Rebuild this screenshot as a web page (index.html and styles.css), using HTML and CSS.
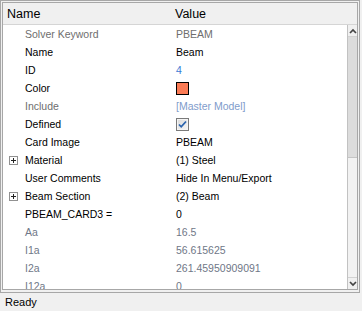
FILE: index.html
```html
<!DOCTYPE html>
<html>
<head>
<meta charset="utf-8">
<link rel="stylesheet" href="styles.css">
</head>
<body>
<div class="frame">
  <div class="grid">
    <div class="header">
      <div class="h-name">Name</div>
      <div class="h-value">Value</div>
    </div>
    <div class="body">
      <div class="rows">
        <div class="row"><div class="name gray">Solver Keyword</div><div class="value gray">PBEAM</div></div>
        <div class="row"><div class="name">Name</div><div class="value">Beam</div></div>
        <div class="row"><div class="name">ID</div><div class="value blue">4</div></div>
        <div class="row"><div class="name">Color</div><div class="value"><span class="swatch"></span></div></div>
        <div class="row"><div class="name gray">Include</div><div class="value lightblue">[Master Model]</div></div>
        <div class="row"><div class="name">Defined</div><div class="value">
          <svg class="check" width="13" height="13" viewBox="0 0 13 13">
            <defs><linearGradient id="cg" x1="0" y1="0" x2="1" y2="1"><stop offset="0" stop-color="#d9d9d9"/><stop offset="1" stop-color="#f7f7f7"/></linearGradient></defs>
            <rect x="0.5" y="0.5" width="12" height="12" fill="url(#cg)" stroke="#7a7a7a"/>
            <rect x="1.5" y="1.5" width="10" height="10" fill="none" stroke="#f4f4f4"/>
            <polyline points="3,6.5 5.2,8.8 10,3.5" fill="none" stroke="#2a63ad" stroke-width="1.8"/>
          </svg></div></div>
        <div class="row"><div class="name">Card Image</div><div class="value">PBEAM</div></div>
        <div class="row"><div class="name">
          <svg class="plus" width="9" height="9" viewBox="0 0 9 9"><rect x="0.5" y="0.5" width="8" height="8" fill="#fff" stroke="#919191"/><path d="M2 4.5H7M4.5 2V7" stroke="#222" stroke-width="1"/></svg>Material</div><div class="value">(1) Steel</div></div>
        <div class="row"><div class="name">User Comments</div><div class="value">Hide In Menu/Export</div></div>
        <div class="row"><div class="name">
          <svg class="plus" width="9" height="9" viewBox="0 0 9 9"><rect x="0.5" y="0.5" width="8" height="8" fill="#fff" stroke="#919191"/><path d="M2 4.5H7M4.5 2V7" stroke="#222" stroke-width="1"/></svg>Beam Section</div><div class="value">(2) Beam</div></div>
        <div class="row"><div class="name">PBEAM_CARD3 =</div><div class="value">0</div></div>
        <div class="row"><div class="name slate">Aa</div><div class="value slate">16.5</div></div>
        <div class="row"><div class="name slate">I1a</div><div class="value slate">56.615625</div></div>
        <div class="row"><div class="name slate">I2a</div><div class="value slate">261.45950909091</div></div>
        <div class="row"><div class="name slate">I12a</div><div class="value slate">0</div></div>
      </div>
      <div class="scrollbar">
        <div class="btn btn-up">
          <svg width="8" height="6" viewBox="0 0 8 6"><polyline points="1,5 4,2 7,5" fill="none" stroke="#444" stroke-width="1.7"/></svg>
        </div>
        <div class="thumb"></div>
        <div class="track"></div>
        <div class="btn btn-down">
          <svg width="8" height="6" viewBox="0 0 8 6"><polyline points="1,1 4,4 7,1" fill="none" stroke="#444" stroke-width="1.7"/></svg>
        </div>
      </div>
    </div>
  </div>
</div>
<div class="status">Ready</div>
</body>
</html>
```
FILE: styles.css
```css
html, body {
  margin: 0;
  padding: 0;
  background: #f0f0f0;
  width: 362px;
  height: 311px;
  overflow: hidden;
  font-family: "Liberation Sans", Arial, sans-serif;
  color: #000;
}

.frame {
  box-sizing: border-box;
  width: 360px;
  height: 293px;
  border: 1px solid #a7a7a7;
  padding: 1px 1px 2px 1px;
  background: #f0f0f0;
}

.grid {
  box-sizing: border-box;
  height: 288px;
  border: 1px solid #a7a7a7;
  display: flex;
  flex-direction: column;
  background: #fff;
}

.header {
  box-sizing: border-box;
  height: 22px;
  flex: none;
  display: grid;
  grid-template-columns: 172px 1fr;
  background: #f0f0f0;
  border-bottom: 1px solid #d5d5d5;
  font-size: 12.5px;
  line-height: 15px;
  padding-top: 4px;
}

.h-name { padding-left: 4px; }
.h-value { padding-left: 0; }

.body {
  flex: 1;
  display: flex;
  min-height: 0;
}

.rows {
  flex: 1;
  overflow: hidden;
  background: #fff;
}

.row {
  display: grid;
  grid-template-columns: 173px 1fr;
  height: 18px;
  font-size: 10.5px;
  line-height: 18px;
  white-space: nowrap;
}

.name {
  position: relative;
  padding-left: 22px;
}

.plus {
  position: absolute;
  left: 6px;
  top: 5px;
}

.value {
  display: flex;
  align-items: center;
}

.gray { color: #6e6e6e; }
.blue { color: #3a7bd5; }
.lightblue { color: #7f9ccb; }
.slate { color: #6f7787; }

.swatch {
  box-sizing: border-box;
  width: 13px;
  height: 13px;
  background: #fb7b55;
  border: 1px solid #000;
}

.check { display: block; }

.scrollbar {
  box-sizing: border-box;
  width: 10px;
  flex: none;
  display: flex;
  flex-direction: column;
  background: #f0f0f0;
  border-left: 1px solid #c2c2c2;
}

.btn {
  box-sizing: border-box;
  height: 12px;
  flex: none;
  display: flex;
  align-items: center;
  justify-content: center;
  background: #f0f0f0;
}

.btn-up { border-bottom: 1px solid #d2d2d2; }
.btn-down { border-top: 1px solid #d2d2d2; }

.thumb {
  box-sizing: border-box;
  height: 121px;
  flex: none;
  background: #dcdcdc;
  border-bottom: 1px solid #c4c4c4;
}

.track {
  flex: 1;
  background: #f2f2f2;
}

.status {
  height: 18px;
  font-size: 11px;
  line-height: 18px;
  padding-left: 5px;
  color: #000;
}
```
